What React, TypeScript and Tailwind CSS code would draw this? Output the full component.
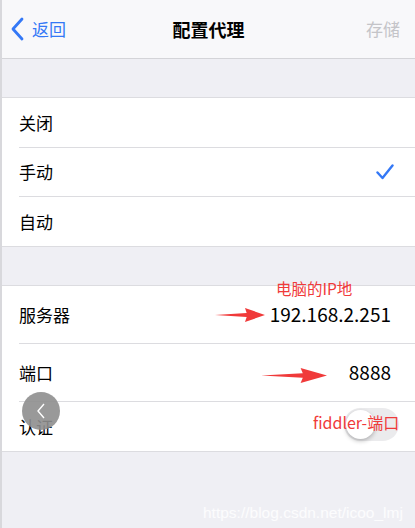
import React from "react";

const font = { fontFamily: '"Noto Sans CJK SC", "Noto Sans", sans-serif' };

function Arrow({ className }: { className: string }) {
  return (
    <svg className={className} viewBox="0 0 60 14" preserveAspectRatio="none">
      <polygon points="0,7 38,5 36,0 60,7 36,14 38,9" fill="#f03a3a" />
    </svg>
  );
}

function Row({ label, right, last, h }: { label: string; right?: React.ReactNode; last?: boolean; h: string }) {
  return (
    <div className="pl-[17px]">
      <div className={`flex items-center justify-between pr-[24px] ${h} ${last ? "" : "border-b border-[#dcdce0]"}`}>
        <span className="text-[17px] text-black">{label}</span>
        {right}
      </div>
    </div>
  );
}

export default function App() {
  return (
    <div className="relative h-[528px] w-[415px] overflow-hidden bg-[#efeff4] border-l-2 border-[#d8d8dc]" style={font}>
      <header className="relative flex h-[59px] items-center border-b border-[#d4d4d8] bg-[#f8f8fa] px-[8px]">
        <div className="flex items-center gap-[8px] text-[#3478f6]">
          <svg width="14" height="24" viewBox="0 0 14 24">
            <path d="M12 2 L3 12 L12 22" fill="none" stroke="#3478f6" strokeWidth="2.8" strokeLinecap="round" strokeLinejoin="round" />
          </svg>
          <span className="text-[17px]">返回</span>
        </div>
        <span className="pointer-events-none absolute left-0 right-0 text-center text-[18px] font-semibold text-black">配置代理</span>
        <span className="ml-auto mr-[7px] text-[17px] text-[#c4c4c8]">存储</span>
      </header>

      <div className="h-[38px]" />

      <section className="border-y border-[#dcdce0] bg-white">
        <Row label="关闭" h="h-[50px]" />
        <Row
          label="手动"
          h="h-[49px]"
          right={
            <svg width="18" height="16" viewBox="0 0 18 16" className="mr-[-3px]">
              <path d="M1.5 8.5 L6.5 14 L16.5 1.5" fill="none" stroke="#3478f6" strokeWidth="2.4" strokeLinecap="round" strokeLinejoin="round" />
            </svg>
          }
        />
        <Row label="自动" h="h-[49px]" last />
      </section>

      <div className="h-[38px]" />

      <section className="border-y border-[#dcdce0] bg-white">
        <Row label="服务器" h="h-[58px]" right={<span className="text-[19px] text-black">192.168.2.251</span>} />
        <Row label="端口" h="h-[58px]" right={<span className="text-[19px] text-black">8888</span>} />
        <Row
          label="认证"
          h="h-[49px]"
          last
          right={
            <div className="mr-[-8px] mt-[-4px] flex h-[33px] w-[55px] items-center rounded-full bg-[#ebebed] p-[2px]">
              <div className="h-[29px] w-[29px] rounded-full bg-white shadow-[0_2px_4px_rgba(0,0,0,0.25)]" />
            </div>
          }
        />
      </section>

      <Arrow className="absolute left-[213px] top-[308px] h-[14px] w-[50px]" />
      <Arrow className="absolute left-[259px] top-[368px] h-[15px] w-[66px]" />
      <span className="absolute left-[274px] top-[279px] text-[15.5px] leading-[18px] text-[#f03a3a]">电脑的IP地</span>
      <span className="absolute left-[311px] top-[413px] text-[16px] leading-[18px] text-[#f03a3a]">fiddler-端口</span>

      <div className="absolute left-[20px] top-[392px] flex h-[38px] w-[38px] items-center justify-center rounded-full bg-[#8e8e8e]/90">
        <svg width="10" height="16" viewBox="0 0 10 16">
          <path d="M8 1 L2 8 L8 15" fill="none" stroke="#fff" strokeWidth="1.4" />
        </svg>
      </div>

      <span className="absolute left-[201px] top-[501px] text-[15.5px] text-white/80" style={{ fontFamily: '"Liberation Sans", sans-serif' }}>
        https://blog.csdn.net/icoo_lmj
      </span>
    </div>
  );
}
